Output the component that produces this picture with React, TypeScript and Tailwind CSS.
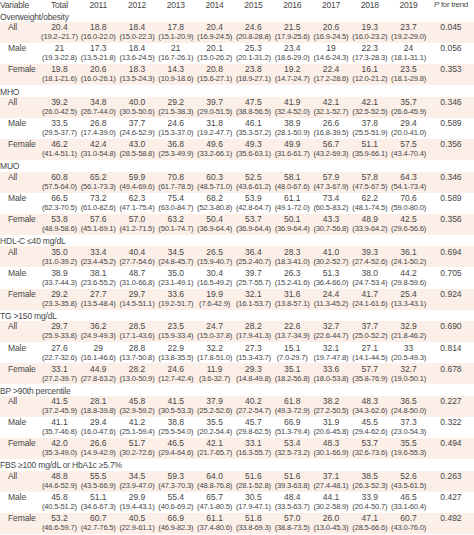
import React from "react";

type Row = { label: string; vals: [string, string][]; p: string; pink: boolean };
type Section = { title: string; rows: Row[] };

const parse = (s: string): [string, string][] =>
  s.split(";").map((x) => {
    const t = x.trim();
    const i = t.indexOf(" ");
    return [t.slice(0, i), t.slice(i + 1)] as [string, string];
  });

const sections: Section[] = [
  {
    title: "Overweight/obesity",
    rows: [
      { label: "All", pink: true, p: "0.045", vals: parse("20.4 (19.2–21.7);18.8 (16.0-22.0);18.4 (15.0-22.3);17.8 (15.1-20.9);20.4 (16.9-24.5);24.6 (20.8-28.8);21.5 (17.9-25.6);20.6 (16.9-24.5);19.3 (16.0-23.2);23.7 (19.2-29.0)") },
      { label: "Male", pink: false, p: "0.056", vals: parse("21 (19.3-22.8);17.3 (13.5-21.8);18.4 (13.6-24.5);21 (16.7-26.1);20.1 (15.0-26.2);25.3 (20.1-31.2);23.4 (18.6-29.0);19 (14.6-24.3);22.3 (17.3-28.3);24 (18.1-31.1)") },
      { label: "Female", pink: true, p: "0.353", vals: parse("19.8 (18.1-21.6);20.6 (16.0-26.1);18.3 (13.5-24.3);14.3 (10.9-18.6);20.8 (15.6-27.1);23.8 (18.9-27.1);19.2 (14.7-24.7);22.4 (17.2-28.6);16.1 (12.0-21.2);23.5 (18.1-29.8)") },
    ],
  },
  {
    title: "MHO",
    rows: [
      { label: "All", pink: true, p: "0.346", vals: parse("39.2 (26.0-42.5);34.8 (26.7-44.0);40.0 (30.5-50.6);29.2 (21.5-38.3);39.7 (29.0-51.5);47.5 (38.8-56.5);41.9 (32.4-52.0);42.1 (32.1-52.7);42.1 (32.5-52.5);35.7 (26.6-45.9)") },
      { label: "Male", pink: false, p: "0.589", vals: parse("33.5 (29.5-37.7);26.8 (17.4-39.0);37.7 (24.6-52.9);24.6 (15.3-37.0);31.8 (19.2-47.7);46.1 (35.3-57.2);38.9 (28.1-50.9);26.6 (16.8-39.5);37.8 (25.5-51.9);29.4 (20.0-41.0)") },
      { label: "Female", pink: true, p: "0.356", vals: parse("46.2 (41.4-51.1);42.4 (31.0-54.8);43.0 (28.5-58.8);36.8 (25.3-49.9);49.6 (33.2-66.1);49.3 (35.6-63.1);49.9 (31.6-61.7);56.7 (43.2-69.3);51.1 (35.9-66.1);57.5 (43.4-70.4)") },
    ],
  },
  {
    title: "MUO",
    rows: [
      { label: "All", pink: true, p: "0.346", vals: parse("60.8 (57.5-64.0);65.2 (56.1-73.3);59.9 (49.4-69.6);70.8 (61.7-78.5);60.3 (48.5-71.0);52.5 (43.6-61.2);58.1 (48.0-67.6);57.9 (47.3-67.9);57.8 (47.5-67.5);64.3 (54.1-73.4)") },
      { label: "Male", pink: false, p: "0.589", vals: parse("66.5 (62.3-70.5);73.2 (61.0-82.6);62.3 (47.1-75.4);75.4 (63.0-84.7);68.2 (52.3-80.8);53.9 (42.8-64.7);61.1 (49.1-72.0);73.4 (60.5-83.2);62.2 (48.1-74.5);70.6 (59.0-80.0)") },
      { label: "Female", pink: true, p: "0.356", vals: parse("53.8 (48.9-58.6);57.6 (45.1-69.1);57.0 (41.2-71.5);63.2 (50.1-74.7);50.4 (36.9-64.4);53.7 (36.9-64.4);50.1 (36.9-64.4);43.3 (30.7-56.8);48.9 (33.9-64.2);42.5 (29.6-56.6)") },
    ],
  },
  {
    title: "HDL-C ≤40 mg/dL",
    rows: [
      { label: "All", pink: true, p: "0.694", vals: parse("35.0 (31.0-39.2);33.4 (23.4-45.2);40.4 (27.7-54.6);34.5 (24.8-45.7);26.5 (15.9-40.7);36.4 (25.2-40.7);28.3 (18.3-41.0);41.0 (30.2-52.7);39.3 (27.4-52.6);36.1 (24.1-50.2)") },
      { label: "Male", pink: false, p: "0.705", vals: parse("38.9 (33.7-44.3);38.1 (23.6-55.2);48.7 (31.0-66.8);35.0 (23.1-49.1);30.4 (16.5-49.2);39.7 (25.7-55.7);26.3 (15.2-41.6);51.3 (36.4-66.0);38.0 (24.7-53.4);44.2 (29.8-59.6)") },
      { label: "Female", pink: true, p: "0.924", vals: parse("29.2 (23.3-35.8);27.7 (13.5-48.4);29.7 (14.5-51.1);33.6 (19.2-51.7);19.9 (7.6-42.9);32.1 (16.1-53.7);31.6 (13.8-57.1);24.4 (11.3-45.2);41.7 (24.1-61.6);25.4 (13.3-43.1)") },
    ],
  },
  {
    title: "TG >150 mg/dL",
    rows: [
      { label: "All", pink: true, p: "0.690", vals: parse("29.7 (25.9-33.8);36.2 (24.9-49.3);28.5 (17.1-43.6);23.5 (15.9-33.4);24.7 (15.0-37.8);28.2 (17.9-41.3);22.6 (13.7-34.9);32.7 (22.6-44.7);37.7 (25.0-52.2);32.9 (21.8-46.2)") },
      { label: "Male", pink: false, p: "0.814", vals: parse("27.6 (22.7-32.6);29 (16.1-46.6);28.8 (13.7-50.8);22.9 (13.8-35.5);32.2 (17.8-51.0);27.3 (15.3-43.7);15.1 (7.0-29.7);32.1 (19.7-47.8);27.1 (14.1-44.5);33 (20.5-49.3)") },
      { label: "Female", pink: true, p: "0.678", vals: parse("33.1 (27.2-39.7);44.9 (27.8-63.2);28.2 (13.0-50.9);24.6 (12.7-42.4);11.9 (3.6-32.7);29.3 (14.8-49.8);35.1 (18.2-56.8);33.6 (18.0-53.8);57.7 (35.8-76.9);32.7 (19.0-50.1)") },
    ],
  },
  {
    title: "BP >90th percentile",
    rows: [
      { label: "All", pink: true, p: "0.227", vals: parse("41.5 (37.2-45.9);28.1 (18.8-39.8);45.8 (32.9-59.2);41.5 (30.5-53.3);37.9 (25.2-52.6);40.2 (27.2-54.7);61.8 (49.3-72.9);38.2 (27.2-50.5);48.3 (34.3-62.6);36.5 (24.8-50.0)") },
      { label: "Male", pink: false, p: "0.322", vals: parse("41.1 (35.7-46.8);29.4 (16.0-47.6);41.2 (25.1-59.4);38.8 (25.5-54.0);35.5 (20.2-54.4);45.7 (29.8-62.5);66.9 (51.3-79.4);31.9 (20.6-45.8);45.5 (29.4-62.6);37.3 (23.0-54.3)") },
      { label: "Female", pink: true, p: "0.494", vals: parse("42.0 (35.3-49.0);26.6 (14.9-42.9);51.7 (30.2-72.6);46.5 (29.4-64.6);42.1 (21.7-65.7);33.1 (16.3-55.7);53.4 (32.5-73.2);48.3 (30.1-66.9);53.7 (32.6-73.6);35.5 (19.6-55.3)") },
    ],
  },
  {
    title: "FBS ≥100 mg/dL or HbA1c ≥5.7%",
    rows: [
      { label: "All", pink: true, p: "0.263", vals: parse("48.8 (44.6-52.9);55.5 (43.5-66.9);34.5 (23.9-47.0);59.3 (47.3-70.3);64.0 (48.8-76.8);51.6 (28.1-52.8);51.6 (39.3-63.8);37.1 (27.4-48.1);38.5 (26.3-52.3);52.6 (43.5-61.5)") },
      { label: "Male", pink: false, p: "0.427", vals: parse("45.8 (40.5-51.2);51.1 (34.6-67.3);29.9 (19.4-43.1);55.4 (40.6-69.2);65.7 (47.1-80.5);30.5 (17.9-47.1);48.4 (33.5-63.7);44.1 (30.2-58.9);33.9 (20.4-50.7);46.5 (33.1-60.4)") },
      { label: "Female", pink: true, p: "0.492", vals: parse("53.2 (46.6-59.7);60.7 (42.7-76.5);40.5 (22.9-61.1);66.9 (46.9-82.3);61.1 (37.4-80.6);51.8 (33.8-69.3);57.0 (38.8-73.5);26.0 (13.0-45.3);47.1 (28.5-66.6);60.7 (43.0-76.0)") },
    ],
  },
];

const years = ["Total", "2011", "2012", "2013", "2014", "2015", "2016", "2017", "2018", "2019"];
const GRID = "grid grid-cols-[40px_repeat(10,38.8px)_46px]";

export default function App() {
  return (
    <div className="w-[474px] h-[535px] overflow-hidden bg-white text-[#474747] font-['Liberation_Sans',Arial,sans-serif]">
      <div className="w-[474px]">
        <div className={`${GRID} h-[10.5px] items-center text-[8.5px] leading-[10px] tracking-[-0.2px]`}>
          <div>Variable</div>
          {years.map((y) => (
            <div key={y} className="text-center">{y}</div>
          ))}
          <div className="text-center whitespace-nowrap text-[8px] tracking-[-0.3px]"><i>P</i> for trend</div>
        </div>
        {sections.map((s) => (
          <div key={s.title}>
            <div className="h-[11.5px] flex items-center pt-[1px] text-[8.5px] leading-[10px] tracking-[-0.2px] whitespace-nowrap">{s.title}</div>
            {s.rows.map((r) => (
              <div key={r.label} className={`${GRID} h-[21.1px] pt-[1.3px] ${r.pink ? "bg-[#fcefe7]" : ""}`}>
                <div className="pl-[8px] text-[8.5px] leading-[9px] tracking-[-0.1px]">{r.label}</div>
                {r.vals.map(([v, ci], i) => (
                  <div key={i} className="flex flex-col items-center whitespace-nowrap">
                    <span className="text-[8.5px] leading-[9px]">{v}</span>
                    <span className="text-[7.6px] leading-[9px] tracking-[-0.2px]">{ci}</span>
                  </div>
                ))}
                <div className="text-center text-[8.5px] leading-[9px]">{r.p}</div>
              </div>
            ))}
          </div>
        ))}
      </div>
    </div>
  );
}
